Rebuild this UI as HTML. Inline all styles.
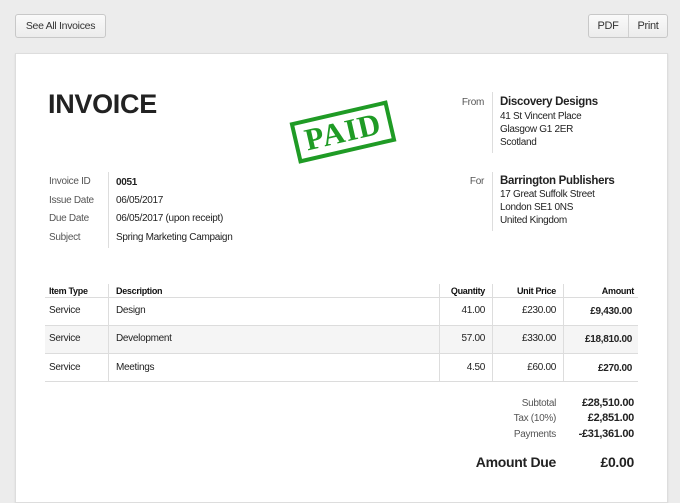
<!DOCTYPE html>
<html><head><meta charset="utf-8"><style>
*{margin:0;padding:0;box-sizing:border-box}
body{width:680px;height:490px;background:#ececec;font-family:"Liberation Sans",Arial,sans-serif;color:#222;position:relative;overflow:hidden;letter-spacing:-0.3px}
.a{position:absolute;white-space:nowrap}
.btn{position:absolute;top:14px;height:24px;border:1px solid #c8c8c8;border-radius:3px;background:linear-gradient(#fafafa,#ececec);font-size:10.5px;color:#333;line-height:22px;text-align:center}
.card{position:absolute;left:15px;top:53px;width:653px;height:450px;background:#fff;border:1px solid #ddd;box-shadow:0 1px 2px rgba(0,0,0,.08)}
.lbl{font-size:10px;color:#555}
.v{font-size:10px;color:#222}
.vl{position:absolute;width:1px;background:#ddd}
.hl{position:absolute;height:1px;background:#dcdcdc;left:45px;width:593px}
.th{font-size:9px;font-weight:bold;color:#111}
.td{font-size:10px;color:#222}
.r{text-align:right}
</style></head><body>
<div class="btn" style="left:15px;width:91px">See All Invoices</div>
<div class="btn" style="left:588px;width:80px"></div>
<div class="a" style="left:588px;top:14px;width:40px;height:24px;line-height:24px;text-align:center;font-size:11px;color:#333">PDF</div>
<div class="a" style="left:628px;top:15px;width:1px;height:22px;background:#d0d0d0"></div>
<div class="a" style="left:628px;top:14px;width:40px;height:24px;line-height:24px;text-align:center;font-size:11px;color:#333">Print</div>
<div class="card"></div>

<div class="a" style="left:48px;top:89px;font-size:27px;font-weight:bold;color:#222;letter-spacing:-0.3px">INVOICE</div>

<div class="a" style="left:293px;top:111px;width:100px;height:42px;border:4px solid #1f9b25;transform:rotate(-13deg);color:#1f9b25;font-family:'Liberation Serif',serif;font-weight:bold;font-size:31px;line-height:34px;text-align:center;letter-spacing:1px">PAID</div>

<div class="vl" style="left:108px;top:172px;height:76px"></div>
<div class="a lbl" style="left:49px;top:176px">Invoice ID</div>
<div class="a v" style="left:116px;top:177px;font-weight:bold">0051</div>
<div class="a lbl" style="left:49px;top:195px">Issue Date</div>
<div class="a v" style="left:116px;top:195px">06/05/2017</div>
<div class="a lbl" style="left:49px;top:213px">Due Date</div>
<div class="a v" style="left:116px;top:213px">06/05/2017 (upon receipt)</div>
<div class="a lbl" style="left:49px;top:232px">Subject</div>
<div class="a v" style="left:116px;top:232px">Spring Marketing Campaign</div>

<div class="vl" style="left:492px;top:92px;height:61px"></div>
<div class="a lbl" style="left:430px;width:54px;top:97px;text-align:right">From</div>
<div class="a" style="left:500px;top:96px;font-size:11.5px;font-weight:bold">Discovery Designs</div>
<div class="a v" style="left:500px;top:111px">41 St Vincent Place</div>
<div class="a v" style="left:500px;top:124px">Glasgow G1 2ER</div>
<div class="a v" style="left:500px;top:137px">Scotland</div>

<div class="vl" style="left:492px;top:172px;height:59px"></div>
<div class="a lbl" style="left:430px;width:54px;top:176px;text-align:right">For</div>
<div class="a" style="left:500px;top:175px;font-size:11.5px;font-weight:bold">Barrington Publishers</div>
<div class="a v" style="left:500px;top:189px">17 Great Suffolk Street</div>
<div class="a v" style="left:500px;top:202px">London SE1 0NS</div>
<div class="a v" style="left:500px;top:215px">United Kingdom</div>

<div class="a" style="left:45px;top:325px;width:593px;height:28px;background:#f5f5f5"></div>
<div class="hl" style="top:297px"></div>
<div class="hl" style="top:325px"></div>
<div class="hl" style="top:353px"></div>
<div class="hl" style="top:381px"></div>
<div class="vl" style="left:108px;top:284px;height:97px"></div>
<div class="vl" style="left:439px;top:284px;height:97px"></div>
<div class="vl" style="left:492px;top:284px;height:97px"></div>
<div class="vl" style="left:563px;top:284px;height:97px"></div>

<div class="a th" style="left:49px;top:286px">Item Type</div>
<div class="a th" style="left:116px;top:286px">Description</div>
<div class="a th r" style="left:439px;width:46px;top:286px">Quantity</div>
<div class="a th r" style="left:492px;width:64px;top:286px">Unit Price</div>
<div class="a th r" style="left:563px;width:71px;top:286px">Amount</div>

<div class="a td" style="left:49px;top:305px">Service</div>
<div class="a td" style="left:116px;top:305px">Design</div>
<div class="a td r" style="left:439px;width:46px;top:305px">41.00</div>
<div class="a td r" style="left:492px;width:64px;top:305px">£230.00</div>
<div class="a td r" style="left:563px;width:69px;top:306px;font-weight:bold">£9,430.00</div>

<div class="a td" style="left:49px;top:333px">Service</div>
<div class="a td" style="left:116px;top:333px">Development</div>
<div class="a td r" style="left:439px;width:46px;top:333px">57.00</div>
<div class="a td r" style="left:492px;width:64px;top:333px">£330.00</div>
<div class="a td r" style="left:563px;width:69px;top:334px;font-weight:bold">£18,810.00</div>

<div class="a td" style="left:49px;top:362px">Service</div>
<div class="a td" style="left:116px;top:362px">Meetings</div>
<div class="a td r" style="left:439px;width:46px;top:362px">4.50</div>
<div class="a td r" style="left:492px;width:64px;top:362px">£60.00</div>
<div class="a td r" style="left:563px;width:69px;top:363px;font-weight:bold">£270.00</div>

<div class="a lbl r" style="left:456px;width:100px;top:398px">Subtotal</div>
<div class="a r" style="left:534px;width:100px;top:397px;font-size:11px;font-weight:bold">£28,510.00</div>
<div class="a lbl r" style="left:456px;width:100px;top:413px">Tax (10%)</div>
<div class="a r" style="left:534px;width:100px;top:412px;font-size:11px;font-weight:bold">£2,851.00</div>
<div class="a lbl r" style="left:456px;width:100px;top:429px">Payments</div>
<div class="a r" style="left:534px;width:100px;top:428px;font-size:11px;font-weight:bold">-£31,361.00</div>
<div class="a r" style="left:436px;width:120px;top:454px;font-size:14px;font-weight:bold">Amount Due</div>
<div class="a r" style="left:534px;width:100px;top:454px;font-size:14px;font-weight:bold">£0.00</div>
</body></html>
